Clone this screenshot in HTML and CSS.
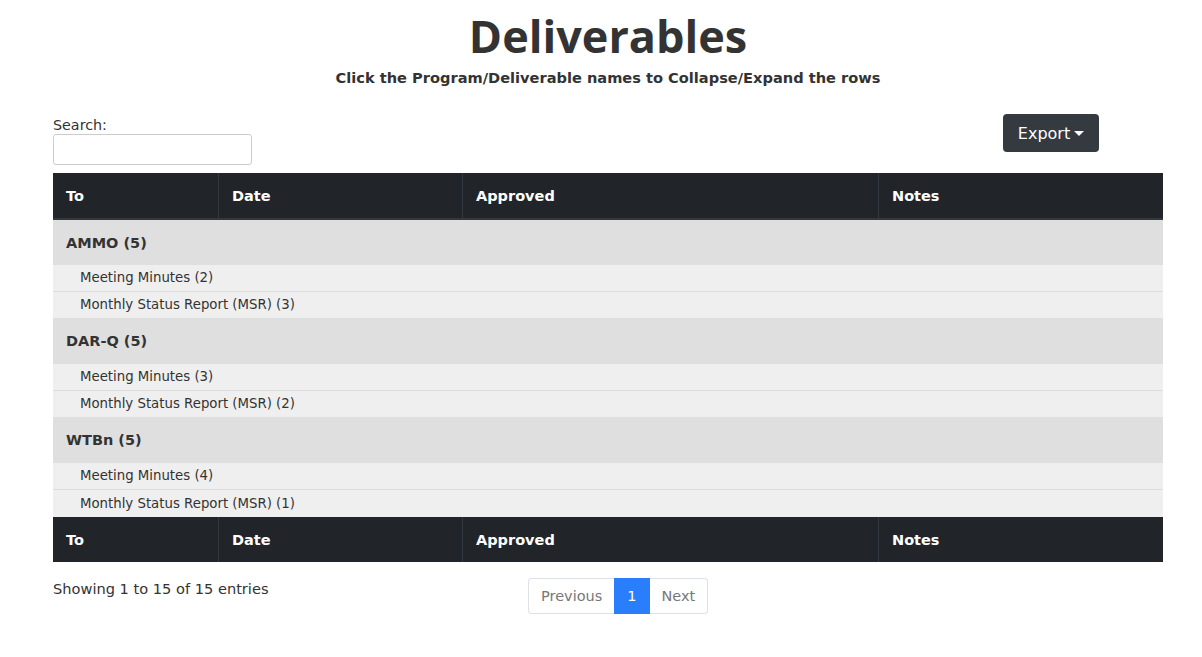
FILE: index.html
```
<html lang="en">
   <head>
      <meta charset="UTF-8">
      <title>Deliverables</title>
      <link rel="stylesheet" href="styles.css">
   </head>
   <body>
      <div class="container">
         <h1>Deliverables</h1>
         <p class="hint">Click the Program/Deliverable names to Collapse/Expand the rows</p>
         <div class="toolbar">
            <div class="search">
               <label for="search">Search:</label>
               <input type="search" id="search">
            </div>
            <button class="export">Export<span class="caret"></span></button>
         </div>
         <table>
            <thead>
               <tr>
                  <th class="c-to">To</th>
                  <th class="c-date">Date</th>
                  <th class="c-appr">Approved</th>
                  <th>Notes</th>
               </tr>
            </thead>
            <tbody>
               <tr class="group"><td colspan="4">AMMO (5)</td></tr>
               <tr class="sub"><td colspan="4">Meeting Minutes (2)</td></tr>
               <tr class="sub"><td colspan="4">Monthly Status Report (MSR) (3)</td></tr>
               <tr class="group"><td colspan="4">DAR-Q (5)</td></tr>
               <tr class="sub"><td colspan="4">Meeting Minutes (3)</td></tr>
               <tr class="sub"><td colspan="4">Monthly Status Report (MSR) (2)</td></tr>
               <tr class="group"><td colspan="4">WTBn (5)</td></tr>
               <tr class="sub"><td colspan="4">Meeting Minutes (4)</td></tr>
               <tr class="sub last"><td colspan="4">Monthly Status Report (MSR) (1)</td></tr>
            </tbody>
            <tfoot>
               <tr>
                  <th>To</th>
                  <th>Date</th>
                  <th>Approved</th>
                  <th>Notes</th>
               </tr>
            </tfoot>
         </table>
         <div class="bottom">
            <div class="info">Showing 1 to 15 of 15 entries</div>
            <ul class="paging">
               <li class="disabled">Previous</li>
               <li class="active">1</li>
               <li class="disabled">Next</li>
            </ul>
         </div>
      </div>
   </body>
</html>
```

FILE: styles.css
```
body {
margin: 0;
font-family: "DejaVu Sans", Verdana, sans-serif;
color: #333;
background-color: #fff;
}
.container {
width: 1110px;
margin: 0 0 0 38px;
padding: 0 15px;
}
h1 {
margin: 10px 0 0;
text-align: center;
font-family: "Open Sans", sans-serif;
font-size: 45px;
font-weight: 700;
line-height: 52px;
color: #333;
}
.hint {
margin: 6px 0 0;
text-align: center;
font-size: 14.6px;
font-weight: bold;
line-height: 20px;
}
.toolbar {
display: flex;
justify-content: space-between;
align-items: flex-start;
margin-top: 26px;
margin-bottom: 8px;
}
.search label {
display: block;
margin-top: 2px;
font-size: 14.3px;
line-height: 18px;
}
.search input {
display: block;
width: 199px;
height: 31px;
box-sizing: border-box;
margin-top: 0;
border: 1px solid #ccc;
border-radius: 3px;
}
.export {
margin: 0 64px 0 0;
width: 96px;
height: 38px;
background-color: #343a40;
color: #fff;
border: none;
border-radius: 4px;
font-family: "DejaVu Sans", sans-serif;
font-size: 16px;
cursor: pointer;
}
.caret {
display: inline-block;
margin-left: 4px;
vertical-align: 3px;
border-top: 5px solid #fff;
border-left: 5px solid transparent;
border-right: 5px solid transparent;
}
table {
width: 100%;
border-collapse: collapse;
}
th {
background-color: #212529;
color: #fff;
text-align: left;
font-size: 14.5px;
font-weight: bold;
height: 45px;
padding: 0 13px;
border-left: 1px solid #32383e;
}
th:first-child {
border-left: none;
}
thead th {
height: 46px;
border-bottom: 2px solid #32383e;
}
.c-to {
width: 139px;
}
.c-date {
width: 217px;
}
.c-appr {
width: 389px;
}
.group td {
background-color: #dfdfdf;
height: 46px;
padding: 0 13px;
font-size: 14.5px;
font-weight: bold;
}
.sub td {
background-color: #efefef;
height: 27px;
padding: 0 27px;
font-size: 13.3px;
border-top: 1px solid #dcdcdc;
}
.group + .sub td {
height: 26px;
border-top: none;
}
.sub.last td {
height: 28px;
}
.bottom {
display: grid;
grid-template-columns: 445px 1fr;
gap: 30px;
margin-top: 16px;
}
.info {
font-size: 14.6px;
padding-top: 2px;
}
.paging {
display: flex;
margin: 0;
padding: 0;
list-style: none;
}
.paging li {
height: 34px;
line-height: 34px;
padding: 0 12px;
font-size: 14.5px;
color: #777;
border: 1px solid #dee2e6;
}
.paging li:first-child {
border-radius: 4px 0 0 4px;
border-right: none;
}
.paging li:last-child {
border-radius: 0 4px 4px 0;
border-left: none;
}
.paging .active {
background-color: #2a7efc;
border-color: #2a7efc;
color: #fff;
}
```
